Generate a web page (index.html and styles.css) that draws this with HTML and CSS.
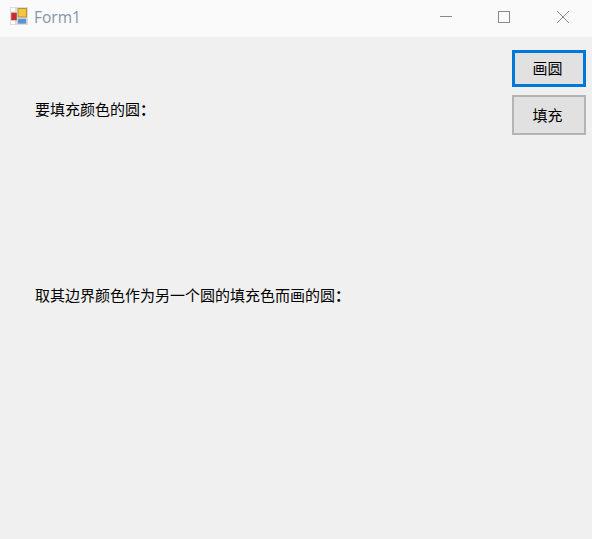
FILE: index.html
```html
<!DOCTYPE html>
<html lang="zh-CN">
<head>
    <meta charset="UTF-8">
    <meta name="viewport" content="width=device-width, initial-scale=1.0">
    <title>Form1</title>
    <link rel="stylesheet" href="styles.css">
</head>
<body>

    <div class="window">
        <div class="titlebar">
            <svg class="app-icon" width="18" height="18" viewBox="0 0 18 18">
                <rect x="0" y="0" width="18" height="18" fill="#dcdcdc"/>
                <rect x="1" y="1" width="4" height="3.5" fill="#fff"/>
                <rect x="1" y="13" width="4" height="4" fill="#fff"/>
                <rect x="1.5" y="6" width="5" height="7" fill="#d0282c" stroke="#9c4a4a" stroke-width="0.6"/>
                <rect x="8" y="1.5" width="8.5" height="8.5" fill="#f5c542" stroke="#a9852a" stroke-width="0.8"/>
                <rect x="8" y="12" width="8" height="4.5" fill="#5a8fd8" stroke="#7fa4d8" stroke-width="0.6"/>
            </svg>
            <span class="title">Form1</span>
            <div class="caption-buttons">
                <button class="caption-btn" type="button">
                    <svg width="14" height="14" viewBox="0 0 14 14"><path d="M0 6.5H12" stroke="#8a8a8a" fill="none"/></svg>
                </button>
                <button class="caption-btn" type="button">
                    <svg width="14" height="14" viewBox="0 0 14 14"><rect x="0.5" y="1.5" width="11" height="11" stroke="#8a8a8a" fill="none"/></svg>
                </button>
                <button class="caption-btn" type="button">
                    <svg width="14" height="14" viewBox="0 0 14 14"><path d="M1 1L13 13M13 1L1 13" stroke="#8a8a8a" fill="none"/></svg>
                </button>
            </div>
        </div>

        <div class="form">
            <div class="labels">
                <p class="label">要填充颜色的圆<span class="colon">：</span></p>
                <p class="label label-second">取其边界颜色作为另一个圆的填充色而画的圆<span class="colon">：</span></p>
            </div>
            <div class="actions">
                <button class="btn btn-focus" type="button">画圆</button>
                <button class="btn" type="button">填充</button>
            </div>
        </div>
    </div>

</body>
</html>
```

FILE: styles.css
```css
* {
    margin: 0;
    padding: 0;
    box-sizing: border-box;
    font-family: "Noto Sans CJK SC", "Liberation Sans", sans-serif;
}

body {
    background-color: #f0f0f0;
    color: #000;
}

.window {
    display: flex;
    flex-direction: column;
    height: 539px;
}

.titlebar {
    display: flex;
    align-items: center;
    height: 37px;
    padding-left: 10px;
    padding-bottom: 3px;
    background-color: #fafafa;
}

.app-icon {
    margin-right: 6px;
    margin-bottom: 2px;
}

.title {
    font-family: "Open Sans", "Liberation Sans", sans-serif;
    font-size: 15.5px;
    color: #8495a8;
}

.caption-buttons {
    display: flex;
    margin-left: auto;
}

.caption-btn {
    display: flex;
    align-items: center;
    justify-content: center;
    width: 58px;
    height: 34px;
    border: none;
    background: none;
}

.form {
    display: flex;
    justify-content: space-between;
    flex: 1;
    padding: 13px 6px 0 35px;
}

.labels {
    padding-top: 48px;
}

.label {
    font-size: 15px;
    line-height: 22px;
}

.colon {
    font-weight: 700;
}

.label-second {
    margin-top: 164px;
}

.actions {
    display: flex;
    flex-direction: column;
    gap: 8px;
    margin-left: -1px;
}

.btn {
    width: 74px;
    height: 40px;
    background-color: #e1e1e1;
    border: 2px solid #b4b4b4;
    font-size: 15px;
    color: #000;
    padding: 0 3px 2px 0;
}

.btn-focus {
    height: 37px;
    border: 3px solid #0078d7;
}
```
